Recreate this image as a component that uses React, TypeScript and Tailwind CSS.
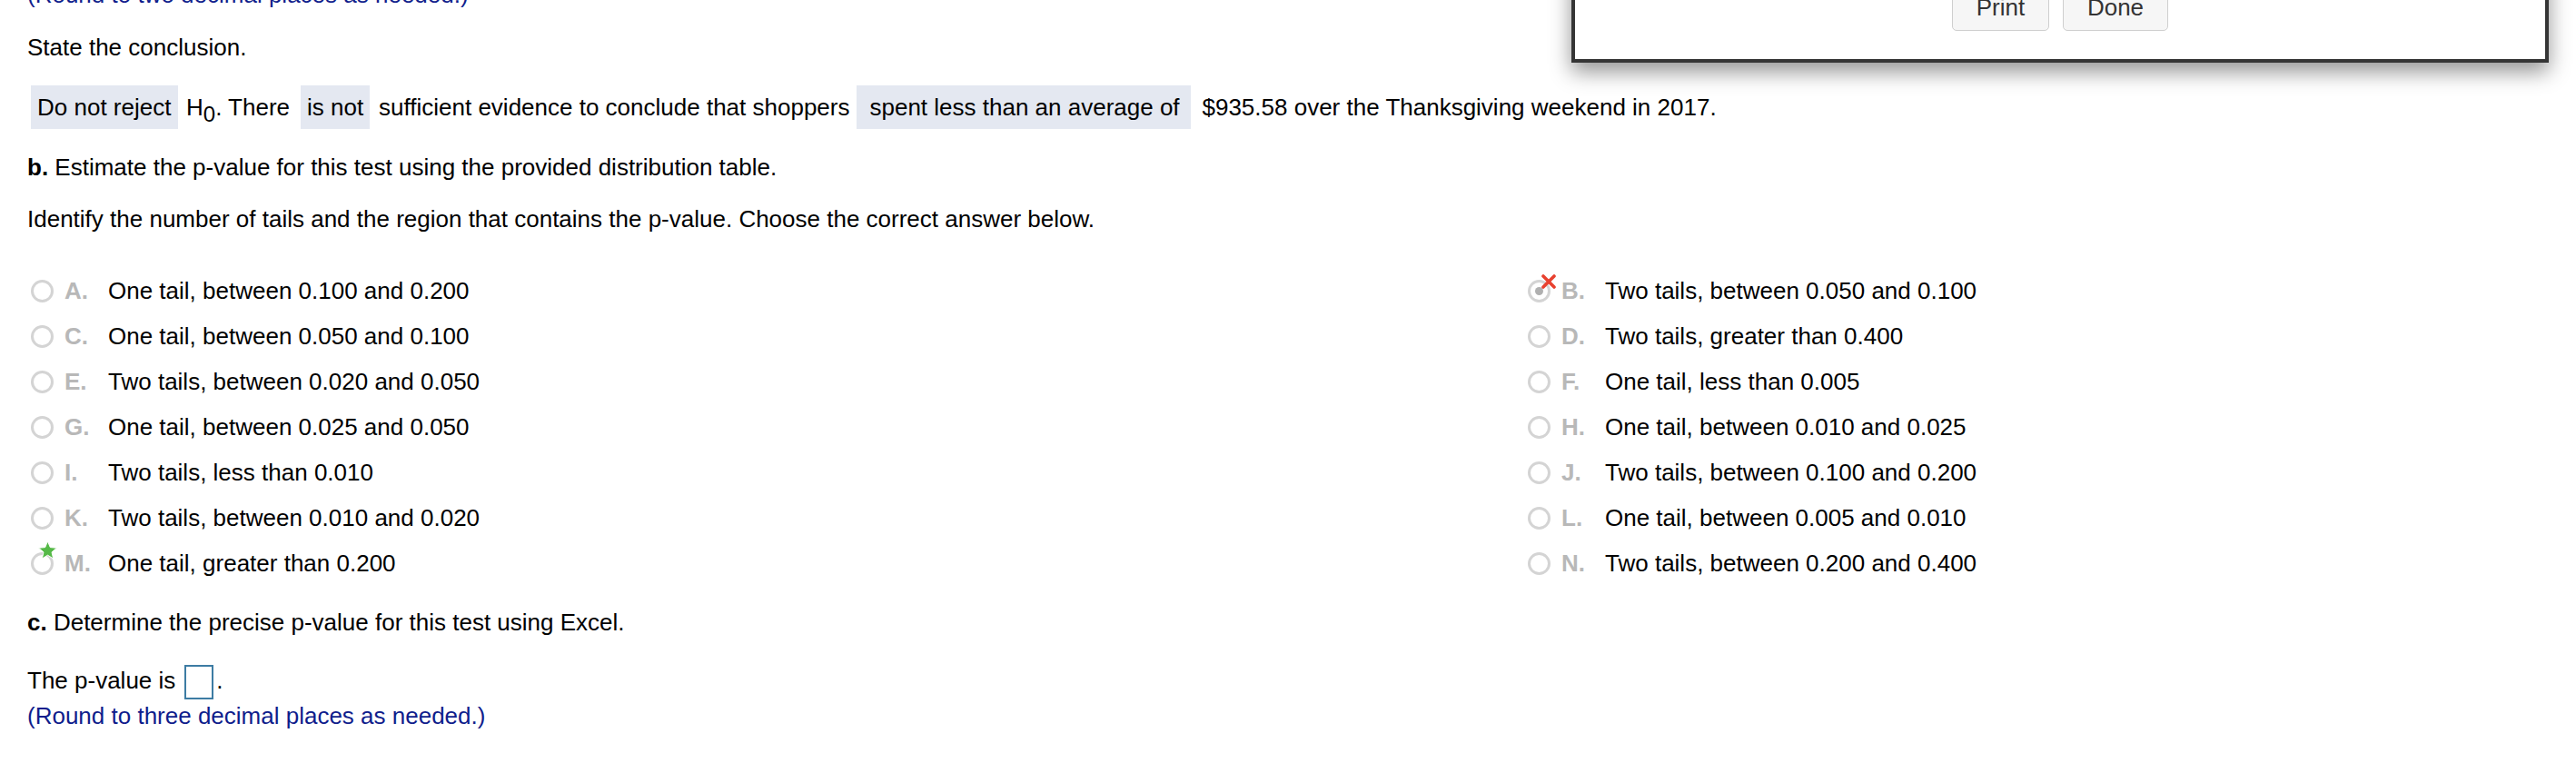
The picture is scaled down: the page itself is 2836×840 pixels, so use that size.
import React from 'react';

type Opt = { letter: string; text: string; mark?: 'wrong' | 'right' };

const rows: [Opt, Opt][] = [
  [{ letter: 'A', text: 'One tail, between 0.100 and 0.200' }, { letter: 'B', text: 'Two tails, between 0.050 and 0.100', mark: 'wrong' }],
  [{ letter: 'C', text: 'One tail, between 0.050 and 0.100' }, { letter: 'D', text: 'Two tails, greater than 0.400' }],
  [{ letter: 'E', text: 'Two tails, between 0.020 and 0.050' }, { letter: 'F', text: 'One tail, less than 0.005' }],
  [{ letter: 'G', text: 'One tail, between 0.025 and 0.050' }, { letter: 'H', text: 'One tail, between 0.010 and 0.025' }],
  [{ letter: 'I', text: 'Two tails, less than 0.010' }, { letter: 'J', text: 'Two tails, between 0.100 and 0.200' }],
  [{ letter: 'K', text: 'Two tails, between 0.010 and 0.020' }, { letter: 'L', text: 'One tail, between 0.005 and 0.010' }],
  [{ letter: 'M', text: 'One tail, greater than 0.200', mark: 'right' }, { letter: 'N', text: 'Two tails, between 0.200 and 0.400' }],
];

// red cross shown next to the answer that was picked
function WrongMark() {
  return (
    <svg className="absolute left-[14px] top-[-6px]" width="18" height="16" viewBox="0 0 18 16">
      <path d="M3 2 L15 14 M15 2 L3 14" stroke="#e8412f" strokeWidth="3.6" strokeLinecap="round" />
    </svg>
  );
}

// green star on the correct answer
function RightMark() {
  return (
    <svg className="absolute left-[7px] top-[-13px]" width="23" height="21" viewBox="0 0 23 21">
      <polygon
        points="11.5,1 14.3,7.6 21.5,8.2 16,12.9 17.7,20 11.5,16.2 5.3,20 7,12.9 1.5,8.2 8.7,7.6"
        fill="#55b947"
        stroke="#ffffff"
        strokeWidth="1"
        strokeLinejoin="round"
      />
    </svg>
  );
}

function Option({ o }: { o: Opt }) {
  const picked = o.mark === 'wrong';
  return (
    <div className="flex items-center h-[50px]">
      <div className="relative ml-[4px] w-[25px] h-[25px] shrink-0">
        <div className="w-[25px] h-[25px] rounded-full border-[3px] border-[#d4d4d4] flex items-center justify-center">
          {picked && <div className="w-[9px] h-[9px] rounded-full bg-[#b0b0b0]" />}
        </div>
        {o.mark === 'wrong' && <WrongMark />}
        {o.mark === 'right' && <RightMark />}
      </div>
      <span className="ml-[12px] w-[48px] shrink-0 font-bold text-[#b8b8b8]">{o.letter}.</span>
      <span className="whitespace-nowrap">{o.text}</span>
    </div>
  );
}

const box = 'h-[48px] flex items-center bg-[#e4e8f1] shrink-0';

export default function App() {
  return (
    <div className="relative w-[2836px] h-[840px] overflow-hidden bg-white text-black text-[26px] leading-[30px] font-['Liberation_Sans',Arial,sans-serif]">
      <div className="pl-[30px]">
        <p className="mt-[-21px] text-[#0f1d8c] whitespace-nowrap">(Round to two decimal places as needed.)</p>
        <p className="mt-[28px]">State the conclusion.</p>

        <div className="mt-[27px] flex items-center h-[48px] whitespace-nowrap">
          <span className={box + ' ml-[4px] w-[162px] pl-[7px]'}>Do not reject</span>
          <span className="ml-[9px]">H</span>
          <span className="relative top-[8px] text-[24px]">0</span>
          <span>. There</span>
          <span className={box + ' ml-[12px] w-[76px] pl-[7px]'}>is not</span>
          <span className="ml-[10px]">sufficient evidence to conclude that shoppers</span>
          <span className={box + ' ml-[8px] w-[368px] pl-[14px]'}>spent less than an average of</span>
          <span className="ml-[12px]">$935.58 over the Thanksgiving weekend in 2017.</span>
        </div>

        <p className="mt-[27px]">
          <b>b.</b> Estimate the p-value for this test using the provided distribution table.
        </p>
        <p className="mt-[27px]">
          Identify the number of tails and the region that contains the p-value. Choose the correct answer below.
        </p>

        <div className="mt-[39px]">
          {rows.map(([l, r]) => (
            <div key={l.letter} className="flex">
              <div className="w-[1648px] shrink-0">
                <Option o={l} />
              </div>
              <Option o={r} />
            </div>
          ))}
        </div>

        <p className="mt-[25px]">
          <b>c.</b> Determine the precise p-value for this test using Excel.
        </p>
        <div className="mt-[34px] whitespace-nowrap">
          The p-value is
          <span className="inline-block align-middle ml-[10px] -my-[4px] w-[32px] h-[38px] border-2 border-[#3d7ca3]" />
          <span className="ml-[3px]">.</span>
        </div>
        <p className="mt-[7px] text-[#0f1d8c]">(Round to three decimal places as needed.)</p>
      </div>

      {/* floating help window, mostly scrolled out of view */}
      <div className="absolute left-[1730px] top-[-130px] w-[1076px] h-[199px] bg-white border-x-4 border-b-4 border-[#353535] shadow-[0_10px_22px_rgba(0,0,0,0.42)] flex items-end justify-center gap-[15px] pb-[31px]">
        <button className="w-[107px] h-[50px] pt-[8px] flex justify-center items-start rounded-[5px] border border-[#cfcfcf] bg-[#f6f6f6] text-[#333]">
          Print
        </button>
        <button className="w-[116px] h-[50px] pt-[8px] flex justify-center items-start rounded-[5px] border border-[#cfcfcf] bg-[#f6f6f6] text-[#333]">
          Done
        </button>
      </div>
    </div>
  );
}
